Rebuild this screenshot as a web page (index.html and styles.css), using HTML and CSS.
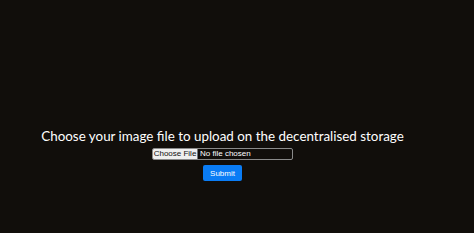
FILE: index.html
```html
<!DOCTYPE html>
<html lang="en">
<head>
    <meta charset="UTF-8">
    <meta name="viewport" content="width=device-width, initial-scale=1.0">
    <title>Upload</title>
    <link rel="stylesheet" href="styles.css">
</head>
<body>
    <main class="upload">
        <h1>Choose your image file to upload on the decentralised storage</h1>
        <form class="upload-form">
            <label class="file-input">
                <span class="file-btn">Choose File</span>
                <span class="file-name">No file chosen</span>
            </label>
            <button type="button" class="submit-btn">Submit</button>
        </form>
    </main>
</body>
</html>
```

FILE: styles.css
```css
* {
    margin: 0;
    padding: 0;
    box-sizing: border-box;
}

body {
    background-color: #110e0b;
    color: #fff;
    font-family: Lato, sans-serif;
    height: 233px;
    overflow: hidden;
}

.upload {
    width: 445px;
    padding-top: 126px;
    display: flex;
    flex-direction: column;
    align-items: center;
}

h1 {
    font-size: 13.4px;
    font-weight: normal;
    line-height: 20px;
    white-space: nowrap;
}

.upload-form {
    display: flex;
    flex-direction: column;
    align-items: center;
    gap: 5px;
    margin-top: 2px;
}

.file-input {
    display: flex;
    width: 141px;
    height: 12px;
    border: 1px solid #8a8a8a;
    border-radius: 2px;
    font-family: 'Liberation Sans', Arial, sans-serif;
    font-size: 8px;
    line-height: 10px;
    overflow: hidden;
}

.file-btn {
    flex: none;
    width: 45px;
    text-align: center;
    background: #efefef;
    color: #111;
    border-right: 1px solid #777;
}

.file-name {
    padding-left: 2px;
    color: #fff;
}

.submit-btn {
    width: 39px;
    height: 16px;
    background: #0a7cf5;
    color: #fff;
    border: none;
    border-radius: 2px;
    font-family: 'Liberation Sans', Arial, sans-serif;
    font-size: 8px;
}
```
